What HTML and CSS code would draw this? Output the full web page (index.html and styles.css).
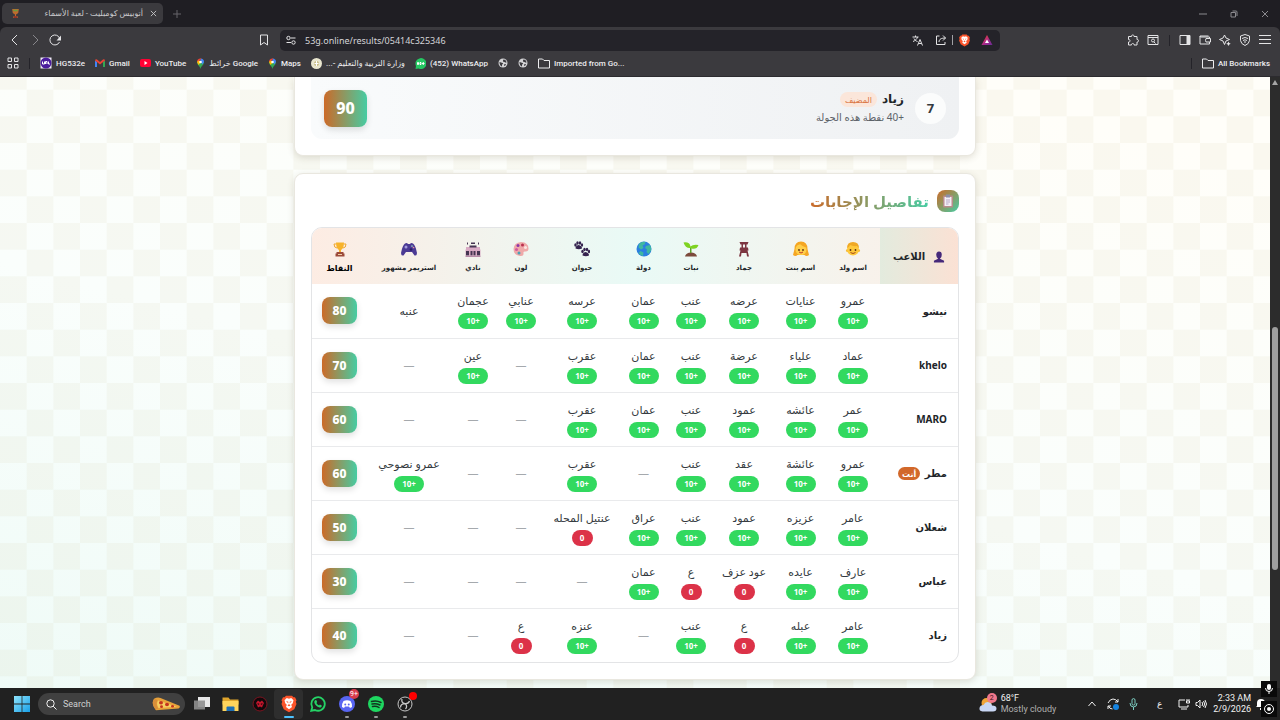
FILE: index.html
```html
<!DOCTYPE html>
<html lang="ar">
<head>
    <meta charset="utf-8">
    <title>أتوبيس كومبليت - لعبة الأسماء</title>
    <link rel="stylesheet" href="styles.css">
</head>
<body>
    <svg class="sprite" aria-hidden="true">
        <defs>
            <linearGradient id="batFill" x1="0" y1="0" x2="1" y2="1"><stop offset="0" stop-color="#ff4724"/><stop offset="0.6" stop-color="#a3278f"/><stop offset="1" stop-color="#662d91"/></linearGradient>
            <linearGradient id="winFill" x1="0" y1="0" x2="1" y2="1"><stop offset="0" stop-color="#8fe3fb"/><stop offset="1" stop-color="#18a0e8"/></linearGradient>
        </defs>
        <symbol id="brave" viewBox="0 0 24 24"><path fill="#fb542b" d="M12 1h4l2 2 2 0 2 4-1 2 1 3-3 7-7 4-7-4-3-7 1-3-1-2 2-4h2l2-2z"/><path fill="#fff" d="M12 5l3-1 3 3-1 4-2 2 1 3-4 3-4-3 1-3-2-2-1-4 3-3z"/><path fill="#fb542b" d="M8 8l3 1v2zM16 8l-3 1v2zM12 12l2 2-2 1-2-1z"/></symbol>
        <symbol id="whatsapp" viewBox="0 0 24 24"><path fill="none" stroke="currentColor" stroke-width="2.4" d="M3 21l1.300-4.500A9 9 0 1 1 8 20z"/><path fill="currentColor" d="M8.500 7c1-.5 1.500 0 1.800 1l.6 1.400-1 1.400c.9 1.600 1.900 2.500 3.500 3.200l1.200-1.300 2.400 1.200c.2 2-1.400 3-3 2.700C10.500 16 7.500 13 7 9.800 7 8.500 7.600 7.400 8.500 7z"/></symbol>
        <symbol id="pin" viewBox="0 0 16 22"><path fill="#34a853" d="M8 22c-1-6-7-8-7-14h14c0 6-6 8-7 14z"/><path fill="#4285f4" d="M8 1a7 7 0 0 1 7 7l-3 5-4-5z"/><path fill="#ea4335" d="M1 8a7 7 0 0 1 7-7l2 0-6 7z"/><path fill="#fbbc04" d="M1 8l3 6 6-6-6-3z"/><circle cx="8" cy="8" r="2.600" fill="#fff"/></symbol>
        <symbol id="globe" viewBox="0 0 20 20"><circle cx="10" cy="10" r="9" fill="#d2d2d4"/><path fill="#3b3a3e" d="M3 8c3 0 4 2 6 2s1 3-1 3v4c-3-1-5-4-5-9zM11 3c4 0 6 3 6 6-2 1-3-1-5-1s-3-3-1-5zM13 12l3 0-2 4-2-1z"/></symbol>
        <symbol id="folder" viewBox="0 0 24 22"><path fill="none" stroke="currentColor" stroke-width="2" d="M1 2h8l3 3h11v15H1z"/></symbol>
    </svg>

    <!-- browser -->
    <header class="browser">
        <div class="tabs">
            <div class="tab">
                <svg class="tab-icon" viewBox="0 0 20 20"><path fill="#c06b2e" d="M4 2h12l-1 7-4 3v3h3v3H6v-3h3v-3L5 9z"/><path fill="#6b9a3c" d="M6 3h8v3H6z"/><path fill="#8c2c28" d="M7 15h6v3H7z"/></svg>
                <span class="tab-title" dir="rtl">أتوبيس كومبليت - لعبة الأسماء</span>
                <button class="icon-btn tab-close" aria-label="Close tab"><svg width="7" height="7" viewBox="0 0 8 8"><path class="line" d="M1 1l6 6M7 1L1 7"/></svg></button>
            </div>
            <button class="icon-btn new-tab" aria-label="New tab"><svg width="8" height="8" viewBox="0 0 8 8"><path class="line" d="M4 0v8M0 4h8"/></svg></button>
            <div class="window-buttons">
                <button class="icon-btn" aria-label="Minimize"><svg width="8" height="8" viewBox="0 0 8 8"><path class="line" d="M0 4h8"/></svg></button>
                <button class="icon-btn" aria-label="Restore"><svg width="8" height="8" viewBox="0 0 8 8"><path class="line" d="M1 2.500h4.500V7H1zM2.500 1H6q1 0 1 1v4"/></svg></button>
                <button class="icon-btn" aria-label="Close"><svg width="8" height="8" viewBox="0 0 8 8"><path class="line" d="M1 1l6 6M7 1L1 7"/></svg></button>
            </div>
        </div>
        <div class="toolbar">
            <div class="nav">
                <button class="icon-btn" aria-label="Back"><svg width="12" height="12" viewBox="0 0 12 12"><path class="line" d="M8 1L3 6l5 5"/></svg></button>
                <button class="icon-btn dim" aria-label="Forward"><svg width="12" height="12" viewBox="0 0 12 12"><path class="line" d="M4 1l5 5-5 5"/></svg></button>
                <button class="icon-btn" aria-label="Reload"><svg width="12" height="12" viewBox="0 0 12 12"><path class="line" d="M10.500 8A5 5 0 1 1 10.700 4.500"/><path fill="currentColor" d="M12 1.500v5H7.500z"/></svg></button>
                <button class="icon-btn bookmark" aria-label="Bookmark"><svg width="12" height="12" viewBox="0 0 12 12"><path class="line" d="M2.500 1h7v10L6 8.500 2.500 11z"/></svg></button>
            </div>
            <div class="address">
                <svg width="10" height="10" viewBox="0 0 10 10"><path class="line" d="M5 3h4.500M.5 7.500H5"/><circle class="line" cx="2.500" cy="3" r="1.700"/><circle class="line" cx="7.500" cy="7.500" r="1.700"/></svg>
                <input class="url" type="text" value="53g.online/results/05414c325346" aria-label="Address">
                <button class="icon-btn" aria-label="Translate"><svg width="11" height="11" viewBox="0 0 22 22"><path class="line thick" d="M1 4h12M7 1v3M11 4c-1 4-4 7-9 9M4 7c2 4 4 5 7 6M11 21l5-12 5 12M13 17h6"/></svg></button>
                <button class="icon-btn" aria-label="Share"><svg width="12" height="12" viewBox="0 0 24 24"><path class="line thick" d="M9 4H3v17h17v-5M8 16c0-6 5-8 13-8M16 3l5 5-5 5"/></svg></button>
                <span class="bar"></span>
                <button class="icon-btn shield" aria-label="Brave Shields"><svg width="13" height="13"><use href="#brave"/></svg></button>
                <button class="icon-btn" aria-label="Rewards"><svg width="12" height="12" viewBox="0 0 24 22"><path fill="url(#batFill)" d="M12 1l11 20H1z"/><path fill="#fff" d="M12 10l4 7H8z"/></svg></button>
            </div>
            <div class="tools">
                <button class="icon-btn" aria-label="Extensions"><svg width="12" height="12" viewBox="0 0 24 24"><path class="line thick" d="M3 5h6c-1-4 6-4 5 0h6v6c4-1 4 6 0 5v6h-6c1-4-6-4-5 0H3v-6c4 1 4-6 0-5z"/></svg></button>
                <button class="icon-btn" aria-label="Search tabs"><svg width="12" height="12" viewBox="0 0 24 24"><path class="line thick" d="M2 3h20v18H2zM2 7h20M14 16l3 3"/><circle class="line thick" cx="12" cy="13" r="3"/></svg></button>
                <span class="sep"></span>
                <button class="icon-btn" aria-label="Sidebar"><svg width="12" height="12" viewBox="0 0 24 24"><path class="line thick" d="M2 3h20v18H2z"/><path fill="currentColor" d="M15 3h7v18h-7z"/></svg></button>
                <button class="icon-btn" aria-label="Wallet"><svg width="12" height="12" viewBox="0 0 24 24"><path class="line thick" d="M21 9V6H4q-2 0-2-2h17M2 4v16h19v-4M14 9h9v7h-9q-2-3 0-7z"/></svg></button>
                <button class="icon-btn" aria-label="Leo"><svg width="12" height="12" viewBox="0 0 24 24"><path class="line thick" d="M11 2l3 6 7 3-7 3-3 7-3-7-7-3 7-3z"/><path fill="currentColor" d="M19 15l1.500 3 3 1.500-3 1.500L19 24l-1.500-3-3-1.500 3-1.500z"/></svg></button>
                <button class="icon-btn" aria-label="VPN"><svg width="12" height="12" viewBox="0 0 24 24"><path class="line thick" d="M12 1l9 3v9q-1 7-9 10-8-3-9-10V4zM6 9q6-4 12 0M8 13q4-3 8 0M10 16h4"/></svg></button>
                <button class="icon-btn" aria-label="Menu"><svg width="12" height="12" viewBox="0 0 12 12"><path class="line" d="M0 1.500h12M0 5.500h12M0 9.500h12"/></svg></button>
            </div>
        </div>
        <nav class="bookmarks">
            <button class="icon-btn" aria-label="Apps"><svg width="12" height="12" viewBox="0 0 12 12"><path class="line" d="M1 1h3.500v3.500H1zM7.500 1H11v3.500H7.500zM1 7.500h3.500V11H1zM7.500 7.500H11V11H7.500z"/></svg></button>
            <span class="sep"></span>
            <a href="#"><svg width="12" height="12" viewBox="0 0 24 24"><path fill="#f2ecfa" d="M1 1h22v22H1z"/><circle cx="12" cy="12" r="11" fill="#4b1d9c"/><path stroke="#fff" stroke-width="2" fill="none" d="M5 9v5h4V9M11 14V9h3v5M17 9v5h3"/></svg>HG532e</a>
            <a href="#"><svg width="10" height="8" viewBox="0 0 20 16"><path fill="#4285f4" d="M0 3l4 3v10H0z"/><path fill="#34a853" d="M16 6l4-3v13h-4z"/><path fill="#ea4335" d="M0 3q1-4 4-2l6 5 6-5q3-2 4 2l-10 8z"/></svg>Gmail</a>
            <a href="#"><svg width="11" height="8" viewBox="0 0 22 16"><rect width="22" height="16" rx="4" fill="#f03"/><path fill="#fff" d="M9 4l6 4-6 4z"/></svg>YouTube</a>
            <a href="#"><svg width="9" height="11"><use href="#pin"/></svg>خرائط Google</a>
            <a href="#"><svg width="9" height="11"><use href="#pin"/></svg>Maps</a>
            <a href="#"><svg width="11" height="11" viewBox="0 0 22 22"><circle cx="11" cy="11" r="11" fill="#e9e6cf"/><circle cx="11" cy="11" r="5" fill="#c9bf8a"/><path stroke="#fff" stroke-width="2" d="M11 6v10M7 11h8"/></svg><span dir="rtl">وزارة التربية والتعليم -...</span></a>
            <a href="#"><svg width="11" height="11" viewBox="0 0 22 22"><path fill="#25c862" d="M1 22l1-6A11 11 0 1 1 7 21z"/><path stroke="#fff" stroke-width="2" fill="none" d="M5 13h2V9H5zM10 13h2V9h-2zM14 11h5M16.500 8v6"/></svg>(452) WhatsApp</a>
            <a href="#" aria-label="Site"><svg width="10" height="10"><use href="#globe"/></svg></a>
            <a href="#" aria-label="Site"><svg width="10" height="10"><use href="#globe"/></svg></a>
            <a href="#"><svg width="12" height="11"><use href="#folder"/></svg>Imported from Go...</a>
            <span class="sep all-sep"></span>
            <a href="#" class="all"><svg width="12" height="11"><use href="#folder"/></svg>All Bookmarks</a>
        </nav>
    </header>

    <!-- results page -->
    <div class="viewport">
        <main class="page" dir="rtl">
            <section class="card card-ranking">
                <div class="player">
                    <span class="rank">7</span>
                    <div class="player-info">
                        <div class="player-name">زياد <span class="host">المضيف</span></div>
                        <div class="player-round">+40 نقطة هذه الجولة</div>
                    </div>
                    <span class="score score-big">90</span>
                </div>
            </section>

            <section class="card">
                <h2 class="title">
                    <span class="title-icon"><svg width="12" height="14" viewBox="0 0 24 28"><rect x="2" y="3" width="20" height="24" rx="2" fill="#b98c8c"/><path fill="#f4eef6" d="M5 6h14v18H5z"/><path fill="#8d8fa8" d="M8 1h8v6H8z"/><path stroke="#b8a8c8" stroke-width="2" d="M8 12h8M8 16h8M8 20h5"/></svg></span>
                    <span class="title-text">تفاصيل الإجابات</span>
                </h2>
                <div class="table-box">
                    <table class="answers">
                        <colgroup>
                            <col class="c-player"><col class="c-boy"><col class="c-girl"><col class="c-thing"><col class="c-plant"><col class="c-country"><col class="c-animal"><col class="c-color"><col class="c-club"><col class="c-streamer"><col class="c-points">
                        </colgroup>
                        <thead>
                            <tr>
                                <th class="th-player"><svg width="12" height="14" viewBox="0 0 24 26"><path fill="#45287a" d="M12 1q6 0 6 7t-4 9l9 4v4H1v-4l9-4Q6 14 6 8t6-7z"/></svg>اللاعب</th>
                                <th><svg viewBox="0 0 32 32"><circle cx="5" cy="19" r="3" fill="#f5b731"/><circle cx="27" cy="19" r="3" fill="#f5b731"/><circle cx="16" cy="17" r="12" fill="#ffc93c"/><path fill="#f0a824" d="M4 14Q4 2 16 2t12 12q-2-1-4-4-8 1-14-2-2 5-6 6z"/><circle cx="11" cy="18" r="1.800" fill="#5a3212"/><circle cx="21" cy="18" r="1.800" fill="#5a3212"/><path stroke="#a3481a" stroke-width="2" fill="none" d="M11 23q5 4 10 0"/></svg>اسم ولد</th>
                                <th><svg viewBox="0 0 32 32"><path fill="#f5a623" d="M3 16Q3 1 16 1t13 15l3 12q-5 4-9 0H9q-4 4-9 0z"/><circle cx="16" cy="17" r="11" fill="#ffcf4a"/><path fill="#f5a623" d="M5 15q0-8 9-9 4 4 12 7v-3Q23 2 16 2 5 3 5 15z"/><circle cx="12" cy="18" r="1.800" fill="#5a3212"/><circle cx="20" cy="18" r="1.800" fill="#5a3212"/><path stroke="#c23a2a" stroke-width="2" fill="none" d="M12 22q4 4 8 0"/></svg>اسم بنت</th>
                                <th><svg viewBox="0 0 32 32"><path fill="#7c3540" d="M7 2h18l-2 5h-2v6h3l1 6h-2l3 12h-4l-1-7h-10l-1 7H6l3-12H7l1-6h3V7H9z"/><path fill="#f3f3ef" d="M14 7h4v6h-4z"/></svg>جماد</th>
                                <th><svg viewBox="0 0 32 32"><path fill="#7b4a3c" d="M4 31q2-8 12-8t12 8z"/><path fill="#5da32d" d="M14 24V12h3v12z"/><path fill="#7ed321" d="M15 14Q5 15 1 3q12-2 14 8 5-5 16-3-4 10-14 7z"/></svg>نبات</th>
                                <th><svg viewBox="0 0 32 32"><circle cx="16" cy="16" r="15" fill="#2b7fe0"/><path fill="#3fb8a0" d="M6 6q6-6 13-4l-2 5-4 2 2 5-5 3-5-4zM20 10l8-2q3 5 2 11l-5 7-4-4 1-5-4-3zM9 20l6 3-1 7q-6-1-9-6z"/></svg>دولة</th>
                                <th><svg viewBox="0 0 32 32"><g fill="#35234f"><ellipse cx="3" cy="8" rx="2.500" ry="3.500"/><ellipse cx="7" cy="4" rx="2.500" ry="3.500"/><ellipse cx="12" cy="4" rx="2.500" ry="3.500"/><ellipse cx="16" cy="8" rx="2.300" ry="3.300"/><path d="M3 15q0-6 6-7 7 1 7 7-6 3-13 0z"/><ellipse cx="17" cy="21" rx="2.500" ry="3.500"/><ellipse cx="21" cy="17" rx="2.500" ry="3.500"/><ellipse cx="26" cy="17" rx="2.500" ry="3.500"/><ellipse cx="30" cy="21" rx="2.300" ry="3.300"/><path d="M17 29q0-6 6-7 7 1 7 7-6 3-13 0z"/></g></svg>حيوان</th>
                                <th><svg viewBox="0 0 32 32"><path fill="#efa9a9" d="M16 2q15 1 15 13 0 7-7 6-4 0-3 4 1 6-7 5Q1 28 1 16 2 3 16 2z"/><circle cx="10" cy="9" r="3" fill="#8b36a8"/><circle cx="19" cy="8" r="3" fill="#b9304e"/><circle cx="7" cy="17" r="3" fill="#d45aa0"/><circle cx="12" cy="24" r="3" fill="#4aa3b8"/><circle cx="25" cy="13" r="3" fill="#fbe6e2"/></svg>لون</th>
                                <th><svg viewBox="0 0 32 32"><path fill="#d9aac4" d="M2 12h28v5H2zM1 17h30v12H1z"/><path fill="#463552" d="M2 20h6v9H2zM11 20h4v9h-4zM17 20h4v9h-4zM24 20h6v9h-6zM9 9h14v4H9zM4 3h2v4H4zM26 3h2v4h-2zM12 3h8v3h-8z"/><path fill="#b78ba8" d="M1 29h30v3H1z"/></svg>نادي</th>
                                <th><svg viewBox="0 0 32 32"><path fill="#4b3a94" d="M8 5q4-2 6 1h4q2-3 6-1 5 3 8 19 0 6-5 5l-5-7H10l-5 7q-5 1-5-5Q3 8 8 5z"/><circle cx="10" cy="12" r="3" fill="#a49bdc"/><circle cx="22" cy="10" r="1.700" fill="#9ad4c2"/><circle cx="25" cy="13" r="1.700" fill="#e58fa0"/><circle cx="20" cy="17" r="2.600" fill="#281b66"/></svg>استريمر مشهور</th>
                                <th class="th-points"><svg viewBox="0 0 32 32"><path fill="none" stroke="#f0a62a" stroke-width="2" d="M8 6H4q0 8 6 8M24 6h4q0 8-6 8"/><path fill="#f7b32b" d="M8 3h16q0 12-6 15v4h-4v-4Q8 15 8 3z"/><path fill="#9c4a3a" d="M9 22h14v3h2v6H7v-6h2z"/><path fill="#f2d0a8" d="M12 26h8v2h-8z"/></svg>النقاط</th>
                            </tr>
                        </thead>
                        <tbody>
                            <tr>
                                <th scope="row">نيشو</th>
                                <td>عمرو<b class="ok">+10</b></td>
                                <td>عنايات<b class="ok">+10</b></td>
                                <td>عرضه<b class="ok">+10</b></td>
                                <td>عنب<b class="ok">+10</b></td>
                                <td>عمان<b class="ok">+10</b></td>
                                <td>عرسه<b class="ok">+10</b></td>
                                <td>عنابي<b class="ok">+10</b></td>
                                <td>عجمان<b class="ok">+10</b></td>
                                <td>عنبه</td>
                                <td><span class="score">80</span></td>
                            </tr>
                            <tr>
                                <th scope="row">khelo</th>
                                <td>عماد<b class="ok">+10</b></td>
                                <td>علياء<b class="ok">+10</b></td>
                                <td>عرضة<b class="ok">+10</b></td>
                                <td>عنب<b class="ok">+10</b></td>
                                <td>عمان<b class="ok">+10</b></td>
                                <td>عقرب<b class="ok">+10</b></td>
                                <td class="none">—</td>
                                <td>عين<b class="ok">+10</b></td>
                                <td class="none">—</td>
                                <td><span class="score">70</span></td>
                            </tr>
                            <tr>
                                <th scope="row">MARO</th>
                                <td>عمر<b class="ok">+10</b></td>
                                <td>عائشه<b class="ok">+10</b></td>
                                <td>عمود<b class="ok">+10</b></td>
                                <td>عنب<b class="ok">+10</b></td>
                                <td>عمان<b class="ok">+10</b></td>
                                <td>عقرب<b class="ok">+10</b></td>
                                <td class="none">—</td>
                                <td class="none">—</td>
                                <td class="none">—</td>
                                <td><span class="score">60</span></td>
                            </tr>
                            <tr>
                                <th scope="row">مطر <span class="you">أنت</span></th>
                                <td>عمرو<b class="ok">+10</b></td>
                                <td>عائشة<b class="ok">+10</b></td>
                                <td>عقد<b class="ok">+10</b></td>
                                <td>عنب<b class="ok">+10</b></td>
                                <td class="none">—</td>
                                <td>عقرب<b class="ok">+10</b></td>
                                <td class="none">—</td>
                                <td class="none">—</td>
                                <td>عمرو نصوحي<b class="ok">+10</b></td>
                                <td><span class="score">60</span></td>
                            </tr>
                            <tr>
                                <th scope="row">شعلان</th>
                                <td>عامر<b class="ok">+10</b></td>
                                <td>عزيزه<b class="ok">+10</b></td>
                                <td>عمود<b class="ok">+10</b></td>
                                <td>عنب<b class="ok">+10</b></td>
                                <td>عراق<b class="ok">+10</b></td>
                                <td>عنتيل المحله<b class="bad">0</b></td>
                                <td class="none">—</td>
                                <td class="none">—</td>
                                <td class="none">—</td>
                                <td><span class="score">50</span></td>
                            </tr>
                            <tr>
                                <th scope="row">عباس</th>
                                <td>عارف<b class="ok">+10</b></td>
                                <td>عايده<b class="ok">+10</b></td>
                                <td>عود عزف<b class="bad">0</b></td>
                                <td>ع<b class="bad">0</b></td>
                                <td>عمان<b class="ok">+10</b></td>
                                <td class="none">—</td>
                                <td class="none">—</td>
                                <td class="none">—</td>
                                <td class="none">—</td>
                                <td><span class="score">30</span></td>
                            </tr>
                            <tr>
                                <th scope="row">زياد</th>
                                <td>عامر<b class="ok">+10</b></td>
                                <td>عبله<b class="ok">+10</b></td>
                                <td>ع<b class="bad">0</b></td>
                                <td>عنب<b class="ok">+10</b></td>
                                <td class="none">—</td>
                                <td>عنزه<b class="ok">+10</b></td>
                                <td>ع<b class="bad">0</b></td>
                                <td class="none">—</td>
                                <td class="none">—</td>
                                <td><span class="score">40</span></td>
                            </tr>
                        </tbody>
                    </table>
                </div>
            </section>
        </main>
        <div class="scrollbar">
            <svg width="6" height="5" viewBox="0 0 6 5"><path fill="#a5a5a5" d="M3 0l3 5H0z"/></svg>
            <div class="thumb"></div>
        </div>
    </div>

    <!-- taskbar -->
    <footer class="taskbar">
        <button class="icon-btn start" aria-label="Start"><svg width="16" height="16" viewBox="0 0 16 16"><path fill="url(#winFill)" d="M0 0h7.600v7.600H0zM8.400 0H16v7.600H8.400zM0 8.400h7.600V16H0zM8.400 8.400H16V16H8.400z"/></svg></button>
        <label class="search">
            <svg width="11" height="11" viewBox="0 0 11 11"><circle class="line" cx="4.500" cy="4.500" r="3.700"/><path class="line" d="M7.200 7.200L10.500 10.500"/></svg>
            <input type="text" placeholder="Search" aria-label="Search">
            <svg class="pizza" width="28" height="14" viewBox="0 0 56 32" preserveAspectRatio="none"><path fill="#e8a23a" d="M4 4Q10 0 17 2L55 20q2 3-2 6L8 30Q-2 16 4 4z"/><path fill="#f6cf62" d="M12 8L50 22 13 25Q8 16 12 8z"/><path fill="#d98f3a" d="M3 6q6-2 8 2-4 8 1 18l-5 3Q-2 17 3 6z"/><g fill="#c4331f"><circle cx="18" cy="13" r="4"/><circle cx="19" cy="22" r="3"/><circle cx="30" cy="17" r="4"/><circle cx="41" cy="21" r="3"/></g></svg>
        </label>
        <div class="apps">
            <button class="icon-btn" aria-label="Task view"><svg width="18" height="16" viewBox="0 0 36 32"><path fill="#e8e8e8" d="M10 2h24v20H10z"/><path fill="#8f8f8f" d="M2 9h22v18H2z" opacity=".9"/></svg></button>
            <button class="icon-btn" aria-label="Explorer"><svg width="17" height="15" viewBox="0 0 34 30"><path fill="#e0a52c" d="M1 1h12l3 4h17v10H1z"/><path fill="#ffd45c" d="M1 8h32v20H1z"/><path fill="#1d6fb5" d="M9 21q0-2 2-2h12q2 0 2 2v7H9z"/></svg></button>
            <button class="icon-btn" aria-label="Game"><svg width="16" height="16" viewBox="0 0 32 32"><circle cx="16" cy="16" r="14" fill="#12090b" stroke="#7c1420" stroke-width="2"/><path fill="#c3152b" d="M8 14l4-5 4 3 4-3 4 5-2 4-2 5-4-2-4 2-2-5z"/><path fill="#12090b" d="M11 14l4 2-3 2zM21 14l-4 2 3 2z"/></svg></button>
            <button class="icon-btn active" aria-label="Brave"><svg width="18" height="18"><use href="#brave"/></svg></button>
            <button class="icon-btn" aria-label="WhatsApp"><svg class="green" width="18" height="18"><use href="#whatsapp"/></svg></button>
            <button class="icon-btn open" aria-label="Discord"><svg width="16" height="16" viewBox="0 0 32 32"><circle cx="16" cy="16" r="16" fill="#5865f2"/><path fill="#fff" d="M9 10q7-3 14 0 4 6 3 12l-4 2-2-3h-8l-2 3-4-2q-1-6 3-12z"/><circle cx="12.500" cy="17" r="2" fill="#5865f2"/><circle cx="19.500" cy="17" r="2" fill="#5865f2"/></svg><span class="badge">9+</span></button>
            <button class="icon-btn open" aria-label="Spotify"><svg width="16" height="16" viewBox="0 0 32 32"><circle cx="16" cy="16" r="16" fill="#1ed760"/><path fill="none" stroke="#12351f" stroke-width="3" stroke-linecap="round" d="M7 11q10-3 19 2M8 16q8-2 16 2M9 21q7-2 13 2"/></svg></button>
            <button class="icon-btn open" aria-label="OBS"><svg width="16" height="16" viewBox="0 0 32 32"><circle cx="16" cy="16" r="14" fill="#1b1b1b" stroke="#c8c8c8" stroke-width="2"/><path fill="none" stroke="#c8c8c8" stroke-width="2.500" d="M10 6q-2 8 6 9 7 1 9-5M16 15q-9 0-9 8M16 15q6 5 1 11"/></svg><span class="badge dot"></span></button>
        </div>
        <div class="weather">
            <svg width="18" height="16" viewBox="0 0 36 32"><circle cx="15" cy="14" r="10" fill="#f0a63a"/><path fill="#c9d7f5" d="M7 31q-7-1-6-7t8-6q4-8 12-5 5 2 5 6 9 0 9 6t-7 6z"/></svg>
            <span class="badge pink">2</span>
            <div><div>68°F</div><div class="muted">Mostly cloudy</div></div>
        </div>
        <div class="tray">
            <button class="icon-btn" aria-label="Hidden icons"><svg width="8" height="8" viewBox="0 0 8 8"><path class="line" d="M0.500 6L4 2l3.500 4"/></svg></button>
            <button class="icon-btn" aria-label="Update"><svg width="12" height="12" viewBox="0 0 12 12"><path class="line" d="M1 5q2-4 5-4 3 0 5 3M11 1v3H8M1 11V8h3M1.500 8q1 3 4 3"/><circle cx="9" cy="9" r="3" fill="#1684e0"/></svg></button>
            <button class="icon-btn teal" aria-label="Microphone"><svg width="9" height="12" viewBox="0 0 9 12"><rect class="line" x="3" y="0.600" width="3" height="6.500" rx="1.500"/><path class="line" d="M1 5q0 4 3.500 4T8 5M4.500 9v3"/></svg></button>
            <button class="icon-btn lang" aria-label="Language">ع</button>
            <button class="icon-btn network" aria-label="Network"><svg width="12" height="12" viewBox="0 0 12 12"><path class="line" d="M7 2H1v7h9V7M3 11h6M9 1v2M11 1v2M8.500 3h3v2h-3z"/></svg></button>
            <button class="icon-btn volume" aria-label="Volume"><svg width="12" height="12" viewBox="0 0 12 12"><path class="line" d="M1 4.500h1.500L5 2v8L2.500 7.500H1zM7 4q1.500 2 0 4M8.500 3q2.500 3 0 6M10 2q3 4 0 8"/></svg></button>
        </div>
        <div class="clock"><div>2:33 AM</div><div>2/9/2026</div></div>
        <button class="icon-btn bell" aria-label="Notifications"><svg width="10" height="12" viewBox="0 0 10 12"><path fill="#fff" d="M5 1q4 0 4 4v3l1 1H0l1-1V5q0-4 4-4zM4 10h3v2H4z"/></svg></button>
    </footer>

    <div class="recorder">
        <span><svg width="12" height="12" viewBox="0 0 12 12"><rect x="4" y="1" width="4" height="6" rx="2" fill="#fff"/><path class="line" d="M2.500 5q0 3.500 3.500 3.500T9.500 5M6 8.500V11"/></svg></span>
        <span><svg width="12" height="12" viewBox="0 0 12 12"><circle class="line" cx="6" cy="6" r="4.500"/><circle cx="6" cy="6" r="2" fill="#fff"/></svg></span>
    </div>
</body>
</html>
```
FILE: styles.css
```css
*{
    box-sizing: border-box;
}
body{
    display: flex;
    flex-direction: column;
    height: 100vh;
    margin: 0;
    overflow: hidden;
    background: #1f1e23;
    font-family: Roboto, "DejaVu Sans", sans-serif;
    font-size: 9px;
}
svg{
    flex: none;
}
.sprite{
    position: absolute;
    width: 0;
    height: 0;
}
.line{
    fill: none;
    stroke: currentColor;
    stroke-width: 1;
}
.thick{
    stroke-width: 2;
}
.icon-btn{
    display: flex;
    align-items: center;
    justify-content: center;
    width: 20px;
    height: 20px;
    padding: 0;
    border: 0;
    background: none;
    color: inherit;
    font: inherit;
}
input{
    min-width: 0;
    padding: 0;
    border: 0;
    outline: 0;
    background: none;
    color: inherit;
    font: inherit;
}

/* browser */
.browser{
    color: #e4e4e6;
}
.tabs{
    display: flex;
    align-items: center;
    height: 27px;
    padding-left: 2px;
    color: #8b8a8f;
}
.tab{
    display: flex;
    align-items: center;
    width: 161px;
    height: 21px;
    padding-left: 8px;
    border-radius: 5px;
    background: #3b3a3e;
    color: #c9c9cc;
}
.tab-icon{
    width: 11px;
    height: 11px;
}
.tab-title{
    flex: 1;
    font-size: 8px;
    white-space: nowrap;
}
.new-tab{
    margin-left: 4px;
    color: #66656b;
}
.window-buttons{
    display: flex;
    gap: 11px;
    margin-left: auto;
    padding-right: 5px;
}
.toolbar{
    display: grid;
    grid-template-columns: 280px 1fr 280px;
    align-items: center;
    height: 26px;
    border-radius: 6px 6px 0 0;
    background: #3b3a3e;
}
.nav{
    display: flex;
    padding: 0 6px 0 5px;
}
.dim{
    color: #87868b;
}
.bookmark{
    margin-left: auto;
}
.address{
    display: flex;
    align-items: center;
    height: 21px;
    padding: 0 2px 0 6px;
    border-radius: 5px;
    background: #242329;
}
.url{
    flex: 1;
    margin-left: 9px;
    color: #d5d5d8;
    font-family: "Noto Sans", sans-serif;
}
.address .icon-btn{
    width: 23px;
}
.address .shield{
    width: 22px;
}
.bar{
    width: 1px;
    height: 10px;
    background: #a0a0a4;
}
.tools{
    display: flex;
    align-items: center;
    justify-content: flex-end;
    padding-right: 5px;
}
.sep{
    width: 1px;
    height: 11px;
    background: #242329;
}
.tools .sep{
    margin: 0 5px 0 6px;
}
.bookmarks{
    display: flex;
    align-items: center;
    gap: 10px;
    height: 24px;
    padding: 0 10px 3px 7px;
    border-bottom: 1px solid #2c2b2f;
    background: #3b3a3e;
    font-size: 8px;
    font-weight: 500;
}
.bookmarks .icon-btn{
    width: 12px;
}
.bookmarks a{
    display: flex;
    align-items: center;
    gap: 4px;
    color: #ececee;
    text-decoration: none;
    white-space: nowrap;
}
.all-sep{
    margin-left: auto;
}

/* results page */
.viewport{
    display: flex;
    flex: 1;
    min-height: 0;
}
.page{
    flex: 1;
    overflow: hidden;
    padding: 0 16px;
    background:
        url("data:image/svg+xml,%3Csvg xmlns='http://www.w3.org/2000/svg' viewBox='0 0 6 6'%3E%3Cpath fill='%23a08838' fill-opacity='.05' d='M0 0h1v1H0zM2 0h1v1H2zM4 0h1v1H4zM1 1h1v1H1zM3 1h1v1H3zM5 1h1v1H5zM0 2h1v1H0zM2 2h1v1H2zM4 2h1v1H4zM1 3h1v1H1zM3 3h1v1H3zM5 3h1v1H5zM0 4h1v1H0zM2 4h1v1H2zM4 4h1v1H4zM1 5h1v1H1zM3 5h1v1H3zM5 5h1v1H5z'/%3E%3C/svg%3E") 0 -14px / 160px 160px,
        linear-gradient(195deg, #fffef9 10%, #fafefc 55%, #effbf7 100%);
    color: #212529;
    font-family: "Noto Sans", "DejaVu Sans", sans-serif;
    font-size: 10px;
}
.card{
    max-width: 682px;
    margin: 0 auto 17px;
    padding: 16px;
    border: 1px solid #e9e7df;
    border-radius: 9px;
    background: #fff;
    box-shadow: 0 2px 7px rgba(80, 70, 40, 0.16);
}
.card-ranking{
    padding-top: 0;
    border-top: 0;
    border-radius: 0 0 9px 9px;
}
.player{
    display: flex;
    align-items: center;
    gap: 11px;
    height: 62px;
    padding: 0 13px;
    border-radius: 0 0 11px 11px;
    background: linear-gradient(270deg, #eff1f3, #f9fbfc);
}
.rank{
    width: 31px;
    border-radius: 50%;
    background: #fbfcfc;
    color: #343a40;
    font-size: 13px;
    font-weight: 700;
    line-height: 31px;
    text-align: center;
}
.player-info{
    flex: 1;
}
.player-name{
    display: flex;
    align-items: center;
    gap: 5px;
    font-size: 12px;
    font-weight: 700;
    line-height: 18px;
}
.host{
    padding: 0 5px;
    border-radius: 8px;
    background: #fbe6da;
    color: #d9733f;
    font-size: 8px;
    font-weight: 400;
    line-height: 15px;
}
.player-round{
    color: #5c6268;
    font-size: 10px;
    line-height: 18px;
}
.score{
    display: inline-block;
    width: 35px;
    border-radius: 8px;
    background: linear-gradient(90deg, #cc6a28, #46cca3);
    box-shadow: 0 3px 6px rgba(0, 0, 0, 0.12);
    color: #fff;
    font-size: 12px;
    font-weight: 800;
    line-height: 27px;
    text-align: center;
}
.score-big{
    width: 43px;
    font-size: 16px;
    line-height: 37px;
}
.title{
    display: flex;
    align-items: center;
    gap: 8px;
    height: 22px;
    margin: 0 0 15px;
    font-size: 15px;
    font-weight: 700;
}
.title-icon{
    display: flex;
    align-items: center;
    justify-content: center;
    width: 22px;
    height: 22px;
    border-radius: 8px;
    background: linear-gradient(135deg, #cc6a28, #46cca3);
}
.title-text{
    background: linear-gradient(90deg, #cc6a28, #46cca3);
    background-clip: text;
    -webkit-background-clip: text;
    color: transparent;
}
.table-box{
    overflow: hidden;
    border: 1px solid #e3e4e6;
    border-radius: 11px;
}
.answers{
    width: 100%;
    border-collapse: collapse;
    table-layout: fixed;
}
.c-player{ width: 78px; }
.c-boy{ width: 54px; }
.c-girl{ width: 51px; }
.c-thing{ width: 62px; }
.c-plant{ width: 44px; }
.c-country{ width: 51px; }
.c-animal{ width: 72px; }
.c-color{ width: 50px; }
.c-club{ width: 46px; }
.c-streamer{ width: 82px; }
.c-points{ width: 57px; }
.answers thead tr{
    height: 56px;
    background: linear-gradient(90deg, #fdece3, #e9faf6 50%, #fdefe7);
}
.answers th, .answers td{
    padding: 0;
    text-align: center;
    white-space: nowrap;
}
.answers thead th{
    padding-top: 3px;
    font-size: 7px;
    line-height: 14px;
}
.answers thead th svg{
    display: block;
    width: 16px;
    height: 16px;
    margin: 0 auto 4px;
}
.answers thead .th-player{
    padding-top: 0;
    background: linear-gradient(90deg, #e3ebde, #fbe1d4);
    font-size: 10px;
}
.answers thead .th-player svg{
    display: inline-block;
    width: 12px;
    height: 12px;
    margin: 0 0 0 8px;
    vertical-align: text-bottom;
}
.answers thead .th-points{
    color: #000;
    font-size: 8px;
}
.answers tbody tr{
    height: 54px;
    border-top: 1px solid #e9eaec;
}
.answers tbody tr:first-child{
    border-top: 0;
}
.answers tbody th{
    padding-right: 11px;
    text-align: right;
}
.answers td{
    color: #343a40;
    font-size: 11px;
    line-height: 18px;
}
.answers .none{
    color: #a5a9ad;
}
.ok, .bad{
    display: block;
    width: 30px;
    margin: 3px auto 0;
    border-radius: 8px;
    background: #32d95f;
    color: #fff;
    font-size: 8px;
    line-height: 16px;
}
.bad{
    width: 21px;
    background: #dc3248;
}
.you{
    display: inline-block;
    margin-right: 2px;
    padding: 0 4px;
    border-radius: 7px;
    background: #d2682a;
    color: #fff;
    font-size: 8px;
    line-height: 13px;
}
.scrollbar{
    display: flex;
    flex-direction: column;
    align-items: center;
    width: 10px;
    padding-top: 3px;
    background: #2c2c2c;
}
.thumb{
    width: 6px;
    height: 40%;
    margin-top: 242px;
    border-radius: 3px;
    background: #9f9f9f;
}

/* taskbar */
.taskbar{
    display: flex;
    align-items: center;
    height: 32px;
    padding-left: 12px;
    background: #212121;
    color: #f2f2f2;
}
.search{
    display: flex;
    align-items: center;
    width: 147px;
    height: 22px;
    margin-left: 6px;
    padding: 0 5px 0 8px;
    border-radius: 11px;
    background: #404040;
}
.search input{
    flex: 1;
    margin-left: 6px;
    font-size: 9px;
}
.search input::placeholder{
    color: #d0d0d0;
}
.apps{
    display: flex;
    margin-left: 2px;
}
.apps .icon-btn{
    position: relative;
    width: 29px;
    height: 30px;
}
.apps .active{
    border-radius: 4px;
    background: #2e2e2e;
}
.apps .active::after, .apps .open::after{
    content: "";
    position: absolute;
    bottom: 1px;
    width: 4px;
    height: 2px;
    border-radius: 1px;
    background: #9a9a9a;
}
.apps .active::after{
    width: 10px;
    background: #4cc2ff;
}
.green{
    color: #25d366;
}
.badge{
    position: absolute;
    top: 0;
    right: 2px;
    width: 10px;
    border-radius: 5px;
    background: #d83b4c;
    color: #fff;
    font-size: 7px;
    line-height: 10px;
    text-align: center;
}
.dot{
    top: 3px;
    width: 8px;
    height: 8px;
    background: #f00;
}
.weather{
    position: relative;
    display: flex;
    align-items: center;
    gap: 4px;
    margin-left: auto;
    line-height: 11px;
}
.pink{
    right: auto;
    left: 8px;
    background: #f0788c;
    color: #3a1018;
}
.muted{
    color: #b0b0b0;
}
.tray{
    display: flex;
    margin: 0 4px 0 25px;
}
.tray .icon-btn{
    width: 21px;
}
.tray .lang{
    width: 31px;
}
.tray .network{
    width: 18px;
}
.tray .volume{
    width: 16px;
}
.clock{
    min-width: 36px;
    line-height: 11px;
    text-align: right;
}
.teal{
    color: #7ed0c4;
}
.bell{
    margin-right: 9px;
}
.recorder{
    position: absolute;
    right: 3px;
    bottom: 3px;
    display: grid;
    gap: 4px;
    color: #fff;
}
.recorder span{
    display: flex;
    align-items: center;
    justify-content: center;
    width: 16px;
    height: 16px;
    background: #0a0a0a;
}
```
